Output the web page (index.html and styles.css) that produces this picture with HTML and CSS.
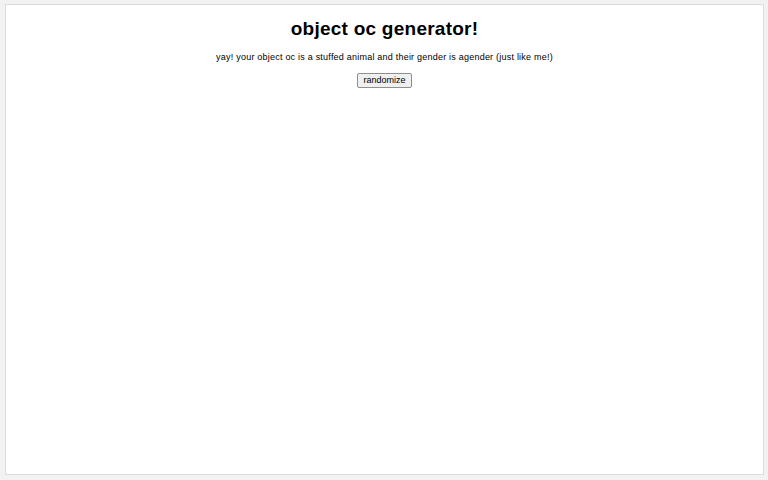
FILE: index.html
```html
<!DOCTYPE html>
<html>
<head>
<meta charset="utf-8">
<title>object oc generator!</title>
<link rel="stylesheet" href="styles.css">
</head>
<body>
<main class="page">
  <h1 class="title">object oc generator!</h1>
  <p class="result">yay! your object oc is a stuffed animal and their gender is agender (just like me!)</p>
  <button class="btn" type="button">randomize</button>
</main>
</body>
</html>
```
FILE: styles.css
```css
html, body {
  margin: 0;
  height: 100%;
}
body {
  background: #f2f2f2;
  padding: 4px 4px 5px 5px;
  box-sizing: border-box;
  font-family: "Liberation Sans", Arial, sans-serif;
}
.page {
  height: 100%;
  box-sizing: border-box;
  background: #fff;
  border: 1px solid #dcdcdc;
  display: flex;
  flex-direction: column;
  align-items: center;
  padding-top: 13px;
}
.title {
  margin: 0;
  font-size: 19px;
  letter-spacing: 0.25px;
  font-weight: bold;
  color: #000;
  line-height: 22px;
}
.result {
  margin: 12px 0 0;
  font-size: 9px;
  letter-spacing: 0.22px;
  color: #000;
  line-height: 11px;
}
.btn {
  margin-top: 10px;
  font-family: "Liberation Sans", Arial, sans-serif;
  font-size: 9px;
  padding: 1px 5px;
  height: 15px;
  line-height: 11px;
  background: #f0f0f0;
  border: 1px solid #8f8f8f;
  border-radius: 2px;
  color: #000;
}
```
